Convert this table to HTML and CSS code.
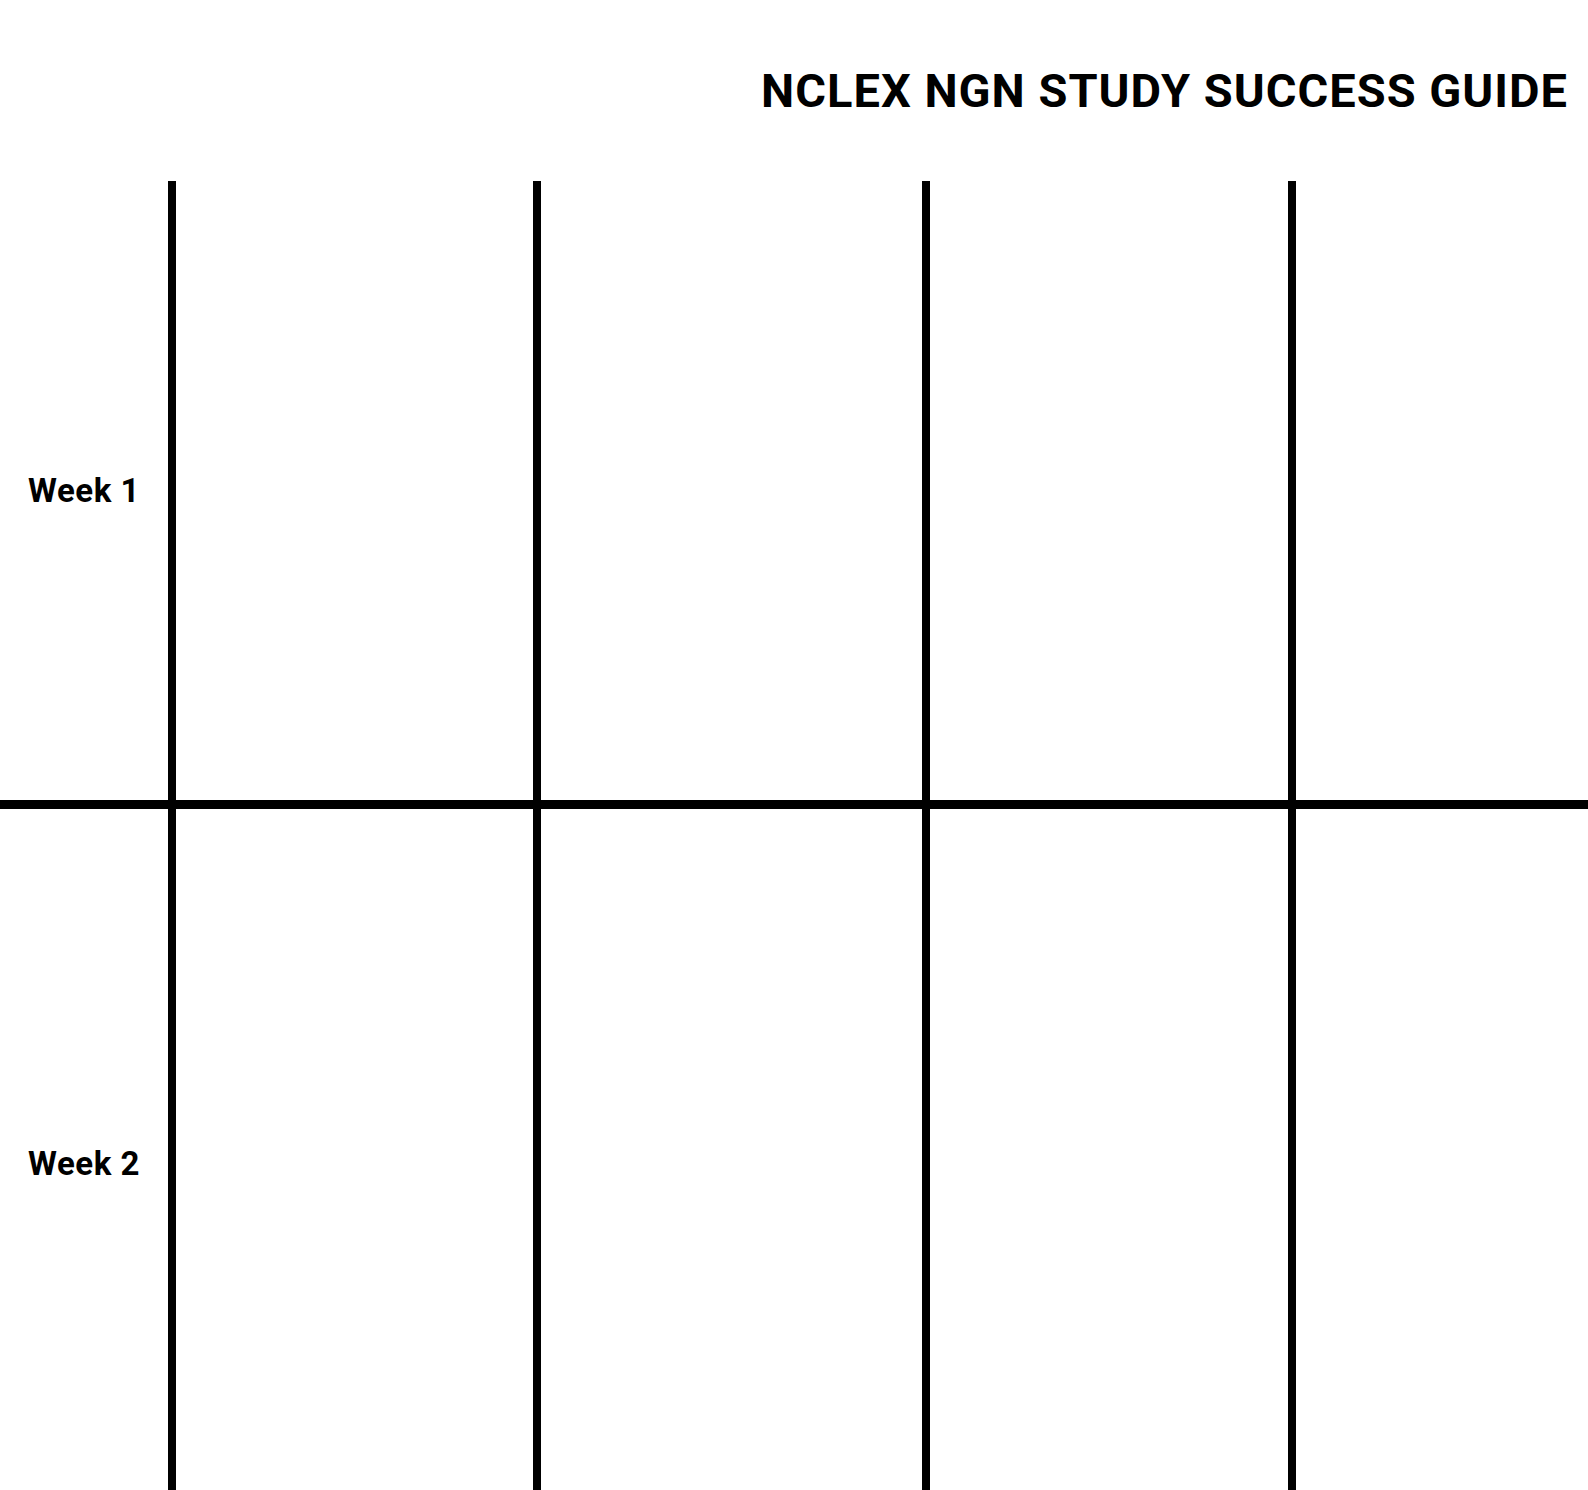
FILE: index.html
```html
<!DOCTYPE html>
<html lang="en">
<head>
<meta charset="utf-8">
<title>NCLEX NGN Study Success Guide</title>
<link rel="stylesheet" href="styles.css">
</head>
<body>
<header class="header">
  <h1 class="title">NCLEX NGN STUDY SUCCESS GUIDE</h1>
</header>
<main class="grid">
  <div class="cell label top">Week 1</div>
  <div class="cell col top"></div>
  <div class="cell col top"></div>
  <div class="cell col top"></div>
  <div class="cell col top"></div>
  <div class="cell label">Week 2</div>
  <div class="cell col"></div>
  <div class="cell col"></div>
  <div class="cell col"></div>
  <div class="cell col"></div>
</main>
</body>
</html>
```

FILE: styles.css
```css
html, body {
  margin: 0;
  padding: 0;
  background: #fff;
}
body {
  width: 1588px;
  height: 1490px;
  overflow: hidden;
  font-family: Roboto, "Liberation Sans", Arial, sans-serif;
  color: #000;
}
.header {
  height: 181px;
  box-sizing: border-box;
  padding: 67px 20px 0 0;
  display: flex;
  justify-content: flex-end;
}
.title {
  margin: 0;
  font-size: 47px;
  line-height: 47px;
  font-weight: 700;
  letter-spacing: 1px;
  white-space: nowrap;
}
.grid {
  display: grid;
  grid-template-columns: 168px 365px 389px 366px 1fr;
  grid-template-rows: 628px 708px;
}
.cell {
  box-sizing: border-box;
}
.top {
  border-bottom: 9px solid #000;
}
.col {
  border-left: 8px solid #000;
}
.label {
  display: flex;
  align-items: center;
  justify-content: center;
  font-size: 33px;
  font-weight: 700;
  letter-spacing: 0.5px;
}
```
